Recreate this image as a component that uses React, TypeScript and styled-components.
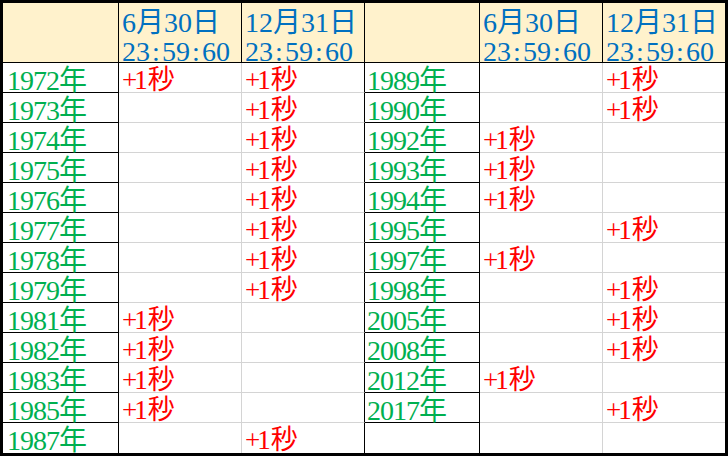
import React from 'react';
import styled, { createGlobalStyle } from 'styled-components';

const Global = createGlobalStyle`
  html, body { margin: 0; padding: 0; background: #ffffff; }
  body { font-family: "Liberation Serif", "Noto Sans CJK JP", serif; }
`;

const BLACK = '#000000';
const GRID = '#d4d4d4';

type Edge = 'black' | 'gray' | 'none';
const edge = (e: Edge) => (e === 'none' ? 'none' : `1px solid ${e === 'black' ? BLACK : GRID}`);

const Sheet = styled.div`
  box-sizing: border-box;
  width: 728px;
  height: 456px;
  border: 3px solid ${BLACK};
  display: grid;
  grid-template-columns: 116px 123px 123px 115px 123px 122px;
  grid-template-rows: 60px repeat(13, 30px);
  font-family: "Liberation Serif", "Noto Sans CJK JP", serif;
  font-size: 28px;
  line-height: 29px;
  background: #ffffff;
`;

const Cell = styled.div<{ $right: Edge; $bottom: Edge; $pad?: number }>`
  box-sizing: border-box;
  border-right: ${(p) => edge(p.$right)};
  border-bottom: ${(p) => edge(p.$bottom)};
  padding: 3px 0 0 ${(p) => p.$pad ?? 3}px;
  white-space: nowrap;
  overflow: visible;
`;

const HeaderCell = styled(Cell)`
  background: #fff2cc;
  color: #0070c0;
  padding-top: 5px;
  display: flex;
  flex-direction: column;
`;

const YearCell = styled(Cell)`
  color: #00b050;
  letter-spacing: -1px;
`;

const MarkCell = styled(Cell)`
  color: #ff0000;
  font-size: 27px;
`;

const Colon = styled.span`
  display: inline-block;
  width: 12px;
  text-align: center;
`;

const Plus = styled.span`
  letter-spacing: -3px;
`;

type Row = { year: string; jun: boolean; dec: boolean };

const left: Row[] = [
  { year: '1972', jun: true, dec: true },
  { year: '1973', jun: false, dec: true },
  { year: '1974', jun: false, dec: true },
  { year: '1975', jun: false, dec: true },
  { year: '1976', jun: false, dec: true },
  { year: '1977', jun: false, dec: true },
  { year: '1978', jun: false, dec: true },
  { year: '1979', jun: false, dec: true },
  { year: '1981', jun: true, dec: false },
  { year: '1982', jun: true, dec: false },
  { year: '1983', jun: true, dec: false },
  { year: '1985', jun: true, dec: false },
  { year: '1987', jun: false, dec: true },
];

const right: Row[] = [
  { year: '1989', jun: false, dec: true },
  { year: '1990', jun: false, dec: true },
  { year: '1992', jun: true, dec: false },
  { year: '1993', jun: true, dec: false },
  { year: '1994', jun: true, dec: false },
  { year: '1995', jun: false, dec: true },
  { year: '1997', jun: true, dec: false },
  { year: '1998', jun: false, dec: true },
  { year: '2005', jun: false, dec: true },
  { year: '2008', jun: false, dec: true },
  { year: '2012', jun: true, dec: false },
  { year: '2017', jun: false, dec: true },
  { year: '', jun: false, dec: false },
];

const Time = () => (
  <span>
    23<Colon>:</Colon>59<Colon>:</Colon>60
  </span>
);

const Leap = ({ on }: { on: boolean }) =>
  on ? (
    <>
      <Plus>+</Plus>1秒
    </>
  ) : null;

export default function App() {
  const total = left.length;
  return (
    <>
      <Global />
      <Sheet>
        <HeaderCell $right="black" $bottom="black" />
        <HeaderCell $right="black" $bottom="black">
          <span>6月30日</span>
          <Time />
        </HeaderCell>
        <HeaderCell $right="black" $bottom="black">
          <span>12月31日</span>
          <Time />
        </HeaderCell>
        <HeaderCell $right="black" $bottom="black" />
        <HeaderCell $right="black" $bottom="black">
          <span>6月30日</span>
          <Time />
        </HeaderCell>
        <HeaderCell $right="none" $bottom="black">
          <span>12月31日</span>
          <Time />
        </HeaderCell>
        {left.map((l, i) => {
          const r = right[i];
          const last = i === total - 1;
          return (
            <React.Fragment key={l.year}>
              <YearCell $right="black" $bottom={last ? 'none' : 'black'} $pad={4}>
                {l.year}年
              </YearCell>
              <MarkCell $right="gray" $bottom={last ? 'none' : 'gray'}>
                <Leap on={l.jun} />
              </MarkCell>
              <MarkCell $right="black" $bottom={last ? 'none' : 'gray'}>
                <Leap on={l.dec} />
              </MarkCell>
              <YearCell $right="black" $bottom={last ? 'none' : 'black'} $pad={2}>
                {r.year ? `${r.year}年` : ''}
              </YearCell>
              <MarkCell $right="gray" $bottom={last ? 'none' : 'gray'}>
                <Leap on={r.jun} />
              </MarkCell>
              <MarkCell $right="none" $bottom={last ? 'none' : 'gray'}>
                <Leap on={r.dec} />
              </MarkCell>
            </React.Fragment>
          );
        })}
      </Sheet>
    </>
  );
}
